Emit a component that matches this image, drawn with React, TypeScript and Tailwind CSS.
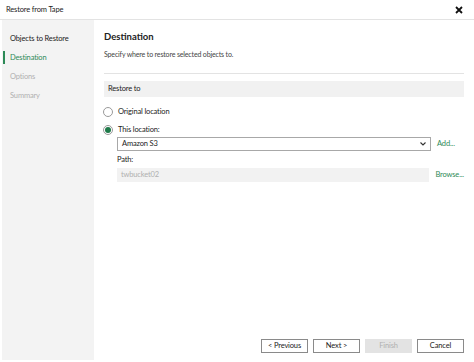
import React from "react";

export default function App() {
  const font = { fontFamily: 'Lato, "Noto Sans", sans-serif' };
  return (
    <div className="w-[474px] h-[362px] bg-white text-[#222] text-[7.5px] tracking-[-0.15px] leading-none flex flex-col" style={font}>
      <div className="h-[20px] shrink-0 flex items-center justify-between pl-[6px] pr-[8px] border-b border-[#e3e3e3]">
        <span className="text-[#222]">Restore from Tape</span>
        <svg width="8" height="8" viewBox="0 0 8 8" className="mr-[3px]">
          <path d="M1 1 L7 7 M7 1 L1 7" stroke="#111" strokeWidth="1.8" />
        </svg>
      </div>
      <div className="flex flex-1 pl-[2px] pb-[2px]">
        <div className="w-[92px] shrink-0 bg-[#f3f3f3] flex flex-col pt-[9px]">
          <div className="h-[19px] flex items-center pl-[8px] text-[#222]">Objects to Restore</div>
          <div className="h-[19px] flex items-center pl-[8px] text-[#2d8a57] relative">
            <div className="absolute left-[1px] top-[3px] w-[2px] h-[13px] bg-[#2d8a57]" />
            Destination
          </div>
          <div className="h-[19px] flex items-center pl-[8px] text-[#b0b0b0]">Options</div>
          <div className="h-[19px] flex items-center pl-[8px] text-[#b0b0b0]">Summary</div>
        </div>
        <div className="flex-1 min-w-0 flex flex-col pl-[10px] pr-[10px] pb-[7px]">
          <div className="mt-[12px] text-[9.5px] tracking-normal font-bold text-[#222]">Destination</div>
          <div className="mt-[9px] text-[7px] text-[#444]">Specify where to restore selected objects to.</div>
          <div className="mt-[15px] h-px bg-[#e3e3e3]" />
          <div className="mt-[7px] h-[16px] bg-[#f1f1f1] flex items-center pl-[4px] text-[#222]">Restore to</div>
          <div className="mt-[9px] h-[12px] flex items-center gap-[5px] -ml-px">
            <div className="w-[10px] h-[10px] rounded-full border border-[#9a9a9a] bg-white" />
            <span>Original location</span>
          </div>
          <div className="mt-[6px] h-[12px] flex items-center gap-[5px] -ml-px">
            <div className="w-[10px] h-[10px] rounded-full border border-[#9a9a9a] bg-white flex items-center justify-center">
              <div className="w-[6px] h-[6px] rounded-full bg-[#1f7a4a]" />
            </div>
            <span>This location:</span>
          </div>
          <div className="mt-[1px] pl-[13px] flex items-center gap-[6px]">
            <div className="w-[314px] h-[14px] border border-[#a8a8a8] bg-white flex items-center justify-between pl-[4px] pr-[4px]">
              <span>Amazon S3</span>
              <svg width="6" height="4" viewBox="0 0 6 4">
                <path d="M0.5 0.5 L3 3 L5.5 0.5" stroke="#333" strokeWidth="1.1" fill="none" />
              </svg>
            </div>
            <span className="text-[#2d8a57]">Add...</span>
          </div>
          <div className="mt-[5px] pl-[13px] h-[8px] flex items-center">Path:</div>
          <div className="mt-[4px] pl-[13px] flex items-center gap-[6px]">
            <div className="w-[314px] h-[14px] bg-[#f2f2f2] flex items-center pl-[4px] text-[#b0b0b0]">twbucket02</div>
            <span className="text-[#2d8a57]">Browse...</span>
          </div>
          <div className="mt-auto flex justify-end gap-[5px]">
            <div className="w-[47px] h-[14px] border border-[#8a8a8a] flex items-center justify-center">&lt; Previous</div>
            <div className="w-[47px] h-[14px] border border-[#8a8a8a] flex items-center justify-center">Next &gt;</div>
            <div className="w-[47px] h-[14px] bg-[#e3e3e3] text-[#b0b0b0] flex items-center justify-center">Finish</div>
            <div className="w-[47px] h-[14px] border border-[#8a8a8a] flex items-center justify-center">Cancel</div>
          </div>
        </div>
      </div>
    </div>
  );
}
